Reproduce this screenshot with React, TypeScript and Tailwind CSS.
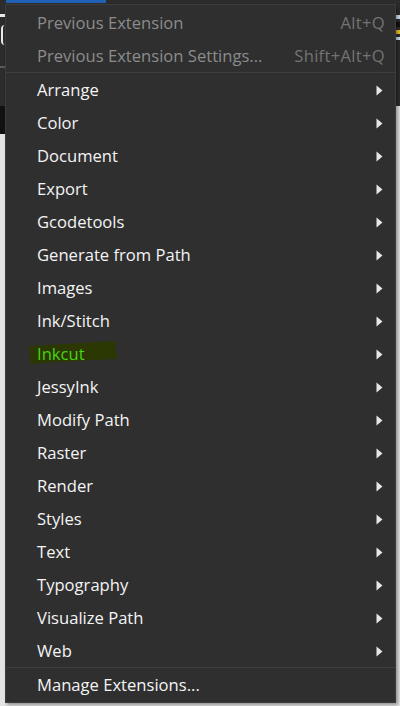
import React from "react";

const items = [
  "Arrange",
  "Color",
  "Document",
  "Export",
  "Gcodetools",
  "Generate from Path",
  "Images",
  "Ink/Stitch",
  "Inkcut",
  "JessyInk",
  "Modify Path",
  "Raster",
  "Render",
  "Styles",
  "Text",
  "Typography",
  "Visualize Path",
  "Web",
];

function Arrow() {
  return (
    <svg width="7" height="11" viewBox="0 0 7 11" className="shrink-0">
      <path d="M0.5 0.5 L6.5 5.5 L0.5 10.5 Z" fill="#e6e6e6" />
    </svg>
  );
}

function Row({ label, shortcut, disabled, sub, marked }: { label: string; shortcut?: string; disabled?: boolean; sub?: boolean; marked?: boolean }) {
  return (
    <div className="relative flex items-center h-[33px] pl-[31px] pr-[9px] pt-[2px]">
      {marked && (
        // hand-drawn marker stroke behind "Inkcut"
        <svg className="absolute left-[22px] top-[3px]" width="90" height="25" viewBox="0 0 90 25">
          <path d="M1 6 C20 5 50 3 87 1 L89 19 C60 20 30 22 2 24 Z" fill="#2c3804" />
        </svg>
      )}
      <span
        className={
          "relative flex-1 " +
          (disabled ? "text-[#8c8c8c]" : marked ? "text-[#45d414]" : "text-[#f4f4f4]")
        }
      >
        {label}
      </span>
      {shortcut && <span className="text-[#737373] pr-[1px] tracking-[0.3px]">{shortcut}</span>}
      {sub && (
        <span className="pr-[3px]">
          <Arrow />
        </span>
      )}
    </div>
  );
}

export default function App() {
  return (
    <div
      className="relative w-[400px] h-[706px] bg-[#e3e3e3] overflow-hidden flex flex-col"
      style={{ fontFamily: '"Open Sans", "Noto Sans", sans-serif' }}
    >
      {/* app window behind the menu */}
      <div className="h-[106px] bg-[#2c2c2c] flex flex-col">
        <div className="ml-[6px] w-[100px] h-[3px] bg-[#1f5fb4]" />
        <div className="flex-1 flex justify-between">
          <div className="w-[5px] flex flex-col pt-[11px] gap-[8px]">
            <div className="h-[3px] bg-[#e8e8e8]" />
            <div className="ml-[1px] h-[20px] rounded-l-full border-l-2 border-[#e8e8e8]" />
            <div className="mt-[13px] h-[2px] bg-[#5a5a5a]" />
          </div>
          <div className="w-[4px] flex flex-col pt-[12px] gap-[3px]">
            <div className="h-[4px] bg-[#cfe0f0]" />
            <div className="h-[5px] bg-[#101010]" />
            <div className="h-[4px] bg-[#f0c020]" />
            <div className="h-[3px] bg-[#cfe0f0]" />
          </div>
        </div>
      </div>
      <div className="w-[5px] h-[28px] bg-[#111]" />

      {/* popup menu */}
      <div className="absolute left-[5px] top-[4px] w-[391px] bg-[#2f2f2f] border border-[#3c3c3c] shadow-[2px_2px_3px_rgba(0,0,0,0.35)] text-[16.6px] leading-none py-[1px]">
        <Row label="Previous Extension" shortcut="Alt+Q" disabled />
        <Row label="Previous Extension Settings..." shortcut="Shift+Alt+Q" disabled />
        <div className="h-px bg-[#3e3e3e]" />
        {items.map((it) => (
          <Row key={it} label={it} sub marked={it === "Inkcut"} />
        ))}
        <div className="h-px bg-[#3e3e3e]" />
        <Row label="Manage Extensions..." />
      </div>
    </div>
  );
}
